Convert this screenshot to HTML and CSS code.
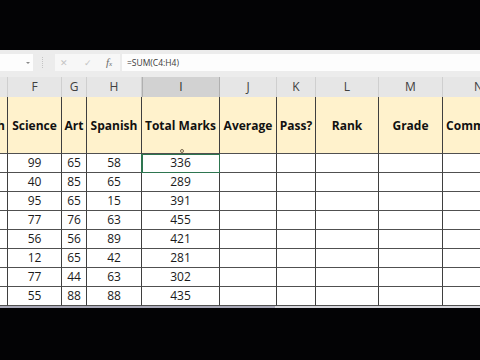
FILE: index.html
```html
<!DOCTYPE html>
<html>
<head>
<meta charset="utf-8">
<link rel="stylesheet" href="styles.css">
</head>
<body>
<div class="screen">
  <div class="letterbox"></div>
  <div class="formula-bar">
    <div class="name-box"><span class="dd"></span></div>
    <div class="sep"></div>
    <div class="fx-buttons">
      <span class="btn cancel">✕</span>
      <span class="btn enter">✓</span>
      <span class="btn fx"><i>f</i><span class="fx-x">x</span></span>
    </div>
    <div class="formula">=SUM(C4:H4)</div>
  </div>
  <div class="viewport">
    <div class="grid colheads">
      <div class="ch"></div>
      <div class="ch">F</div>
      <div class="ch">G</div>
      <div class="ch">H</div>
      <div class="ch active">I</div>
      <div class="ch">J</div>
      <div class="ch">K</div>
      <div class="ch">L</div>
      <div class="ch">M</div>
      <div class="ch">N</div>
    </div>
    <div class="grid sheet">
      <div class="hd">English</div>
      <div class="hd">Science</div>
      <div class="hd">Art</div>
      <div class="hd">Spanish</div>
      <div class="hd total">Total Marks<span class="cursor"></span></div>
      <div class="hd">Average</div>
      <div class="hd">Pass?</div>
      <div class="hd">Rank</div>
      <div class="hd">Grade</div>
      <div class="hd">Comments</div>

      <div class="c"></div><div class="c">99</div><div class="c">65</div><div class="c">58</div><div class="c selected">336</div><div class="c"></div><div class="c"></div><div class="c"></div><div class="c"></div><div class="c"></div>
      <div class="c"></div><div class="c">40</div><div class="c">85</div><div class="c">65</div><div class="c">289</div><div class="c"></div><div class="c"></div><div class="c"></div><div class="c"></div><div class="c"></div>
      <div class="c"></div><div class="c">95</div><div class="c">65</div><div class="c">15</div><div class="c">391</div><div class="c"></div><div class="c"></div><div class="c"></div><div class="c"></div><div class="c"></div>
      <div class="c"></div><div class="c">77</div><div class="c">76</div><div class="c">63</div><div class="c">455</div><div class="c"></div><div class="c"></div><div class="c"></div><div class="c"></div><div class="c"></div>
      <div class="c"></div><div class="c">56</div><div class="c">56</div><div class="c">89</div><div class="c">421</div><div class="c"></div><div class="c"></div><div class="c"></div><div class="c"></div><div class="c"></div>
      <div class="c"></div><div class="c">12</div><div class="c">65</div><div class="c">42</div><div class="c">281</div><div class="c"></div><div class="c"></div><div class="c"></div><div class="c"></div><div class="c"></div>
      <div class="c"></div><div class="c">77</div><div class="c">44</div><div class="c">63</div><div class="c">302</div><div class="c"></div><div class="c"></div><div class="c"></div><div class="c"></div><div class="c"></div>
      <div class="c"></div><div class="c">55</div><div class="c">88</div><div class="c">88</div><div class="c">435</div><div class="c"></div><div class="c"></div><div class="c"></div><div class="c"></div><div class="c"></div>
    </div>
  </div>
  <div class="scroll-strip"><div class="thumb"></div></div>
</div>
</body>
</html>
```

FILE: styles.css
```css
* { box-sizing: border-box; }
html, body { margin: 0; padding: 0; background: #030305; }
.screen {
  width: 480px;
  height: 360px;
  overflow: hidden;
  background: #030305;
  font-family: "Open Sans", "Liberation Sans", sans-serif;
}
.letterbox { height: 50px; }

.formula-bar {
  height: 27px;
  background: #ececec;
  display: flex;
  align-items: flex-start;
  padding-top: 4px;
}
.name-box {
  width: 33px;
  height: 17px;
  background: #fdfdfd;
  display: flex;
  align-items: center;
  justify-content: flex-end;
  padding-right: 3px;
}
.dd {
  width: 0; height: 0;
  border-left: 2px solid transparent;
  border-right: 2px solid transparent;
  border-top: 2px solid #8a8a8a;
}
.sep {
  width: 1px;
  height: 11px;
  margin: 3px 12px 0 9px;
  border-left: 1px dotted #c4c4c4;
}
.fx-buttons {
  width: 65px;
  height: 17px;
  background: #f7f7f7;
  display: flex;
  align-items: center;
  gap: 14px;
  padding-left: 4px;
}
.btn { width: 10px; text-align: center; font-size: 9px; color: #c4c4c4; line-height: 1; }
.enter + .fx { margin-left: -3px; }
.fx { font-family: "Liberation Serif", serif; font-size: 11px; color: #6a6a6a; }
.fx-x { font-size: 7px; font-style: italic; }
.formula {
  flex: 1;
  margin-left: 2px;
  height: 17px;
  background: #fdfdfd;
  font-size: 8.5px;
  color: #3a3a3a;
  line-height: 17px;
  padding-left: 5px;
}

.viewport { overflow: hidden; width: 480px; background: #ececec; }
.grid {
  display: grid;
  grid-template-columns: 48px 54px 25px 55px 78px 57px 39px 63px 64px 72px;
  margin-left: -40px;
  width: 555px;
}
.colheads { height: 20px; background: #e6e6e6; }
.ch {
  font-size: 12px;
  color: #404040;
  text-align: center;
  line-height: 20px;
  border-right: 1px solid #cfcfcf;
  border-bottom: 1px solid #bdbdbd;
}
.ch.active {
  background: #d2d2d2;
  border-left: 1px solid #b0b0b0;
  border-right: 1px solid #b0b0b0;
  border-bottom: 2px solid #217346;
  color: #2a2a2a;
}
.sheet { background: #ffffff; }
.hd, .c {
  border-right: 1px solid #3f3f3f;
  border-bottom: 1px solid #505050;
  text-align: center;
  white-space: nowrap;
}
.hd {
  height: 57px;
  background: #fff2cc;
  font-weight: 700;
  font-size: 12px;
  color: #111;
  display: flex;
  align-items: center;
  justify-content: center;
  position: relative;
}
.c {
  height: 19px;
  font-size: 12px;
  color: #1a1a1a;
  line-height: 18px;
  background: #fff;
}
.c.selected {
  outline: 2px solid #2e7550;
  outline-offset: -1px;
}
.cursor {
  position: absolute;
  left: 38px;
  top: 52px;
  width: 4px;
  height: 4px;
  border: 1px solid #7a6a50;
  border-radius: 50%;
}
.scroll-strip {
  height: 2px;
  background: #d6d6dc;
}
.thumb { width: 275px; height: 2px; background: #a9a9b8; }
```
